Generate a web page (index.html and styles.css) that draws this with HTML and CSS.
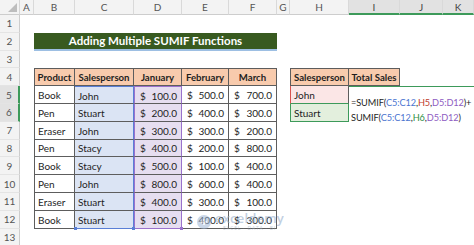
FILE: index.html
```html
<!DOCTYPE html>
<html>
<head>
<meta charset="utf-8">
<link rel="stylesheet" href="styles.css">
</head>
<body>
<div class="sheet">
  <div class="corner"></div>
  <div class="ch">A</div><div class="ch">B</div><div class="ch">C</div><div class="ch">D</div><div class="ch">E</div><div class="ch">F</div><div class="ch">G</div><div class="ch">H</div><div class="ch sel">I</div><div class="ch sel">J</div><div class="ch sel">K</div>

  <div class="rh">1</div><div></div><div></div><div></div><div></div><div></div><div></div><div></div><div></div><div></div><div></div><div></div>

  <div class="rh">2</div><div></div><div class="title">Adding Multiple SUMIF Functions</div><div></div><div></div><div></div><div></div><div></div>

  <div class="rh">3</div><div></div><div></div><div></div><div></div><div></div><div></div><div></div><div></div><div></div><div></div><div></div>

  <div class="rh">4</div><div></div>
  <div class="td th lead">Product</div><div class="td th">Salesperson</div><div class="td th">January</div><div class="td th">February</div><div class="td th">March</div>
  <div></div>
  <div class="td th lead">Salesperson</div><div class="td th">Total Sales</div><div></div><div></div>

  <div class="rh sel">5</div><div></div>
  <div class="td lead">Book</div><div class="td rc top">John</div><div class="td rd m top"><span>$</span><span>100.0</span></div><div class="td m"><span>$</span><span>500.0</span></div><div class="td m"><span>$</span><span>700.0</span></div>
  <div></div>
  <div class="td lead h5">John</div>
  <div class="formula"><span>=SUMIF(<b class="f-c">C5:C12</b>,<b class="f-h5">H5</b>,<b class="f-d">D5:D12</b>)+</span><span>SUMIF(<b class="f-c">C5:C12</b>,<b class="f-h6">H6</b>,<b class="f-d">D5:D12</b>)</span></div>

  <div class="rh sel">6</div><div></div>
  <div class="td lead">Pen</div><div class="td rc">Stuart</div><div class="td rd m"><span>$</span><span>200.0</span></div><div class="td m"><span>$</span><span>400.0</span></div><div class="td m"><span>$</span><span>300.0</span></div>
  <div></div>
  <div class="td lead h6">Stuart</div>

  <div class="rh">7</div><div></div>
  <div class="td lead">Eraser</div><div class="td rc">John</div><div class="td rd m"><span>$</span><span>300.0</span></div><div class="td m"><span>$</span><span>300.0</span></div><div class="td m"><span>$</span><span>200.0</span></div>
  <div></div><div></div><div></div><div></div><div></div>

  <div class="rh">8</div><div></div>
  <div class="td lead">Pen</div><div class="td rc">Stacy</div><div class="td rd m"><span>$</span><span>400.0</span></div><div class="td m"><span>$</span><span>200.0</span></div><div class="td m"><span>$</span><span>800.0</span></div>
  <div></div><div></div><div></div><div></div><div></div>

  <div class="rh">9</div><div></div>
  <div class="td lead">Book</div><div class="td rc">Stacy</div><div class="td rd m"><span>$</span><span>500.0</span></div><div class="td m"><span>$</span><span>100.0</span></div><div class="td m"><span>$</span><span>400.0</span></div>
  <div></div><div></div><div></div><div></div><div></div>

  <div class="rh">10</div><div></div>
  <div class="td lead">Pen</div><div class="td rc">John</div><div class="td rd m"><span>$</span><span>800.0</span></div><div class="td m"><span>$</span><span>600.0</span></div><div class="td m"><span>$</span><span>400.0</span></div>
  <div></div><div></div><div></div><div></div><div></div>

  <div class="rh">11</div><div></div>
  <div class="td lead">Eraser</div><div class="td rc">Stuart</div><div class="td rd m"><span>$</span><span>400.0</span></div><div class="td m"><span>$</span><span>300.0</span></div><div class="td m"><span>$</span><span>100.0</span></div>
  <div></div><div></div><div></div><div></div><div></div>

  <div class="rh">12</div><div></div>
  <div class="td lead">Book</div><div class="td rc bot">Stuart</div><div class="td rd m bot"><span>$</span><span>100.0</span></div><div class="td m"><span>$</span><span>400.0</span></div><div class="td m"><span>$</span><span>300.0</span></div>
  <div></div><div></div><div></div><div></div><div></div>

  <div class="rh">13</div><div></div><div></div><div></div><div></div><div></div><div></div><div></div><div></div><div></div><div></div><div></div>
</div>

<div class="handle hc-l"></div>
<div class="handle hc-r"></div>
<div class="handle hd-r"></div>

<div class="watermark">
  <svg class="wm-logo" width="16" height="16" viewBox="0 0 16 16"><circle cx="8" cy="8" r="7" fill="#9fb7d6"/><path d="M5 8h6M8 5v6" stroke="#e8eef6" stroke-width="2"/></svg>
  <div class="wm-text"><span class="wm-name">exceldemy</span><span class="wm-sub">EXCEL · DATA · BI</span></div>
</div>
</body>
</html>
```

FILE: styles.css
```css
html, body {
  margin: 0;
  padding: 0;
  background: #ffffff;
}

body {
  width: 474px;
  height: 245px;
  overflow: hidden;
  position: relative;
}

.sheet {
  display: grid;
  grid-template-columns: 20px 14px 41px 59px 48px 47px 48px 13px 59px 51px 43px 31px;
  grid-template-rows: 15px repeat(13, 17.8px);
  font-family: Lato, "Open Sans", sans-serif;
  font-size: 10px;
  color: #1e1e1e;
}

.sheet > div {
  box-sizing: border-box;
  min-width: 0;
}

.corner {
  background: #f3f3f3;
  border-right: 1px solid #d6d6d6;
  border-bottom: 1px solid #cdcdcd;
  position: relative;
}

.corner::after {
  content: "";
  position: absolute;
  right: 2px;
  bottom: 2px;
  border-style: solid;
  border-width: 0 0 9px 9px;
  border-color: transparent transparent #bdbdbd transparent;
}

.ch {
  background: #f3f3f3;
  border-right: 1px solid #d9d9d9;
  border-bottom: 1px solid #cdcdcd;
  color: #555555;
  font-size: 10px;
  display: flex;
  align-items: center;
  justify-content: center;
}

.ch.sel {
  background: #e2e2e2;
  border-bottom: 2px solid #3d9a5a;
  color: #444444;
}

.rh {
  background: #f3f3f3;
  border-right: 1px solid #cdcdcd;
  border-bottom: 1px solid #e4e4e4;
  color: #555555;
  font-size: 10px;
  display: flex;
  align-items: center;
  justify-content: center;
}

.rh.sel {
  background: #e2e2e2;
  border-right: 2px solid #3d9a5a;
}

.title {
  grid-column: span 5;
  background: #385a20;
  border-bottom: 2px solid #9dbfe3;
  color: #ffffff;
  font-weight: 700;
  font-size: 11.5px;
  display: flex;
  align-items: center;
  justify-content: center;
}

.td {
  border-right: 1px solid #5d5d5d;
  border-bottom: 1px solid #5d5d5d;
  display: flex;
  align-items: center;
  padding: 1px 3px 0;
  white-space: nowrap;
  overflow: hidden;
}

.td.lead {
  border-left: 1px solid #5d5d5d;
}

.td.th {
  background: #f8cbad;
  border-top: 1px solid #5d5d5d;
  font-weight: 700;
  font-size: 9.6px;
  justify-content: center;
  padding: 0 1px;
}

.td.m {
  justify-content: space-between;
  padding: 1px 4px 0 5px;
}

.td.rc {
  background: #dbe4f4;
  border-right: 1px solid #5a7fd6;
}

.td.rd {
  background: #e6def0;
  border-left: 1px solid #9a72cc;
  border-right: 1px solid #9a72cc;
}

.td.rc.top {
  border-top: 1px solid #5a7fd6;
}

.td.rd.top {
  border-top: 1px solid #9a72cc;
}

.td.rc.bot {
  border-bottom: 1px solid #5a7fd6;
}

.td.rd.bot {
  border-bottom: 1px solid #9a72cc;
}

.sheet > .td.h5 {
  background: #fbe6e6;
  border-left: 1px solid #d9534f;
  border-bottom: 1px solid #3d9a5a;
}

.sheet > .td.h6 {
  background: #e3efdd;
  border-left: 1px solid #3d9a5a;
  border-right: 1px solid #3d9a5a;
  border-bottom: 1px solid #3d9a5a;
}

.formula {
  grid-column: span 3;
  grid-row: span 2;
  border-top: 1px solid #3d9a5a;
  display: flex;
  flex-direction: column;
  padding: 8px 0 0 2px;
  line-height: 15px;
  font-size: 9.2px;
  letter-spacing: -0.1px;
  white-space: nowrap;
  color: #1e1e1e;
  overflow: visible;
}

.formula b {
  font-weight: 400;
}

.f-c { color: #4a74d0; }
.f-h5 { color: #c0392b; }
.f-d { color: #8e5cc2; }
.f-h6 { color: #2f8f46; }

.handle {
  position: absolute;
  width: 3px;
  height: 3px;
}

.hc-l {
  left: 74px;
  top: 227px;
  background: #5a7fd6;
}

.hc-r {
  left: 132px;
  top: 227px;
  background: #5a7fd6;
}

.hd-r {
  left: 180px;
  top: 227px;
  background: #9a72cc;
}

.watermark {
  position: absolute;
  left: 196px;
  top: 212px;
  display: flex;
  align-items: center;
  gap: 3px;
  opacity: 0.55;
}

.wm-text {
  display: flex;
  flex-direction: column;
  align-items: center;
  line-height: 1;
}

.wm-name {
  font-family: "Open Sans", sans-serif;
  font-size: 13px;
  font-weight: 600;
  color: #8ea8c9;
  letter-spacing: 0.2px;
}

.wm-sub {
  font-family: "Open Sans", sans-serif;
  font-size: 5px;
  color: #9aa9bc;
  letter-spacing: 0.8px;
  margin-top: 1px;
}
```
